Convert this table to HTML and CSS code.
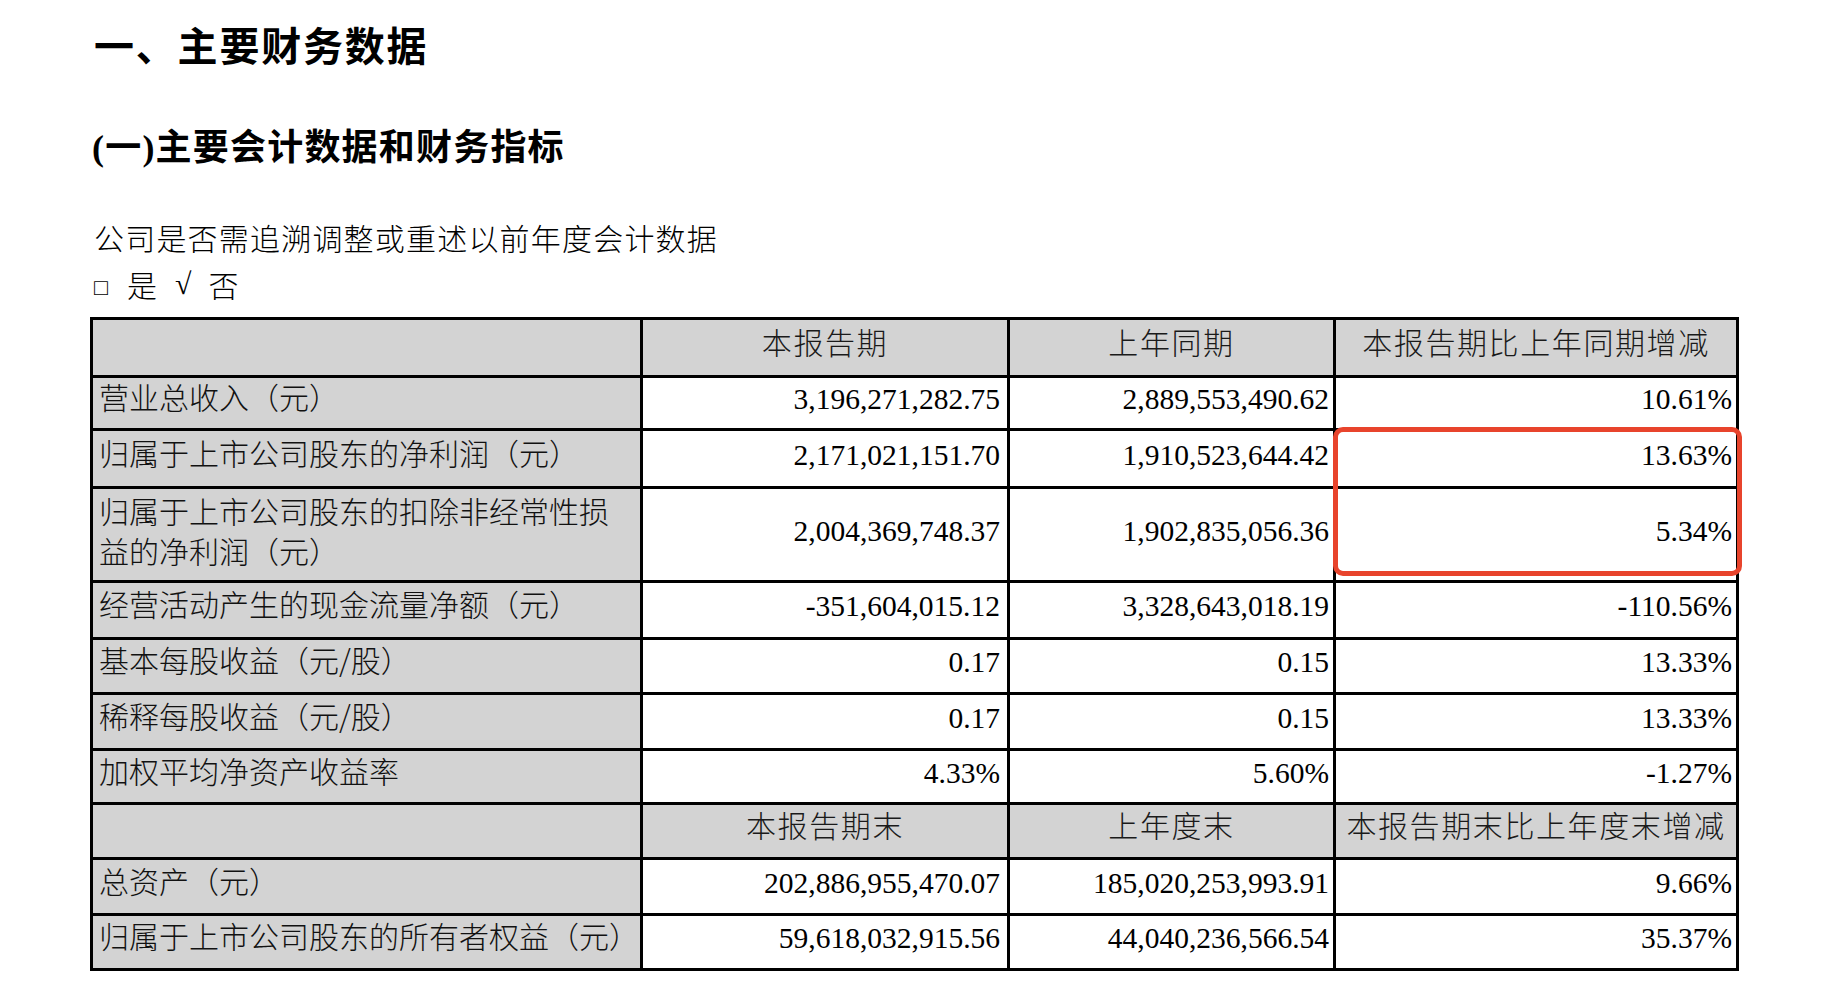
FILE: index.html
```html
<!DOCTYPE html>
<html lang="zh-CN">
<head>
<meta charset="utf-8">
<title>主要财务数据</title>
<link rel="stylesheet" href="styles.css">
</head>
<body>
<main class="page">
  <h1 class="title">一、主要财务数据</h1>
  <h2 class="subtitle"><span class="paren">(</span>一<span class="paren">)</span>主要会计数据和财务指标</h2>
  <p class="note">公司是否需追溯调整或重述以前年度会计数据</p>
  <p class="choice"><span class="box">□</span><span class="opt">是</span><span class="check">√</span><span class="opt">否</span></p>

  <div class="table-wrap">
    <table class="fin">
      <colgroup>
        <col class="c-label">
        <col class="c-cur">
        <col class="c-prev">
        <col class="c-chg">
      </colgroup>
      <tr class="head rh58">
        <th></th><th>本报告期</th><th>上年同期</th><th>本报告期比上年同期增减</th>
      </tr>
      <tr class="rh53">
        <td class="label">营业总收入（元）</td>
        <td class="num">3,196,271,282.75</td>
        <td class="num">2,889,553,490.62</td>
        <td class="num">10.61%</td>
      </tr>
      <tr class="rh58">
        <td class="label">归属于上市公司股东的净利润（元）</td>
        <td class="num">2,171,021,151.70</td>
        <td class="num">1,910,523,644.42</td>
        <td class="num">13.63%</td>
      </tr>
      <tr class="rh94">
        <td class="label two">归属于上市公司股东的扣除非经常性损<br>益的净利润（元）</td>
        <td class="num">2,004,369,748.37</td>
        <td class="num">1,902,835,056.36</td>
        <td class="num">5.34%</td>
      </tr>
      <tr class="rh57">
        <td class="label">经营活动产生的现金流量净额（元）</td>
        <td class="num">-351,604,015.12</td>
        <td class="num">3,328,643,018.19</td>
        <td class="num">-110.56%</td>
      </tr>
      <tr class="rh55">
        <td class="label">基本每股收益（元/股）</td>
        <td class="num">0.17</td>
        <td class="num">0.15</td>
        <td class="num">13.33%</td>
      </tr>
      <tr class="rh56">
        <td class="label">稀释每股收益（元/股）</td>
        <td class="num">0.17</td>
        <td class="num">0.15</td>
        <td class="num">13.33%</td>
      </tr>
      <tr class="rh54">
        <td class="label">加权平均净资产收益率</td>
        <td class="num">4.33%</td>
        <td class="num">5.60%</td>
        <td class="num">-1.27%</td>
      </tr>
      <tr class="head rh55">
        <th></th><th>本报告期末</th><th>上年度末</th><th>本报告期末比上年度末增减</th>
      </tr>
      <tr class="rh56">
        <td class="label">总资产（元）</td>
        <td class="num">202,886,955,470.07</td>
        <td class="num">185,020,253,993.91</td>
        <td class="num">9.66%</td>
      </tr>
      <tr class="rh55">
        <td class="label">归属于上市公司股东的所有者权益（元）</td>
        <td class="num">59,618,032,915.56</td>
        <td class="num">44,040,236,566.54</td>
        <td class="num">35.37%</td>
      </tr>
    </table>
    <div class="highlight"></div>
  </div>
</main>
</body>
</html>
```

FILE: styles.css
```css
html, body {
  margin: 0;
  padding: 0;
  background: #ffffff;
}

.page {
  padding-left: 90px;
  color: #000;
  font-family: "Noto Sans CJK SC", "Liberation Serif", serif;
}

.title {
  margin: 20px 0 0 4px;
  font-size: 40px;
  line-height: 48px;
  font-weight: 700;
  letter-spacing: 1.8px;
}

.subtitle {
  margin: 54px 0 0 2px;
  font-size: 36px;
  line-height: 44px;
  font-weight: 700;
  letter-spacing: 1.2px;
}

.subtitle .paren {
  font-family: "Liberation Serif", serif;
  font-weight: 700;
}

.note {
  margin: 47px 0 0 4px;
  font-size: 30px;
  line-height: 40px;
  font-weight: 300;
  letter-spacing: 1.2px;
}

.choice {
  margin: 4px 0 0 4px;
  font-size: 30px;
  line-height: 40px;
  font-weight: 300;
  display: flex;
  align-items: center;
}

.choice .box {
  font-family: "DejaVu Sans", sans-serif;
  font-size: 23px;
  line-height: 40px;
  margin-right: 19px;
  padding-top: 6px;
}

.choice .opt {
  margin-right: 18px;
}

.choice .check {
  font-family: "Liberation Serif", serif;
  font-size: 30px;
  margin-right: 17px;
}

.table-wrap {
  position: relative;
  margin-top: 10px;
  width: 1649px;
}

.fin {
  border-collapse: collapse;
  table-layout: fixed;
  width: 1649px;
  font-size: 30px;
}

.c-label { width: 550px; }
.c-cur { width: 367px; }
.c-prev { width: 326px; }
.c-chg { width: 403px; }

.fin th,
.fin td {
  border: 3px solid #000;
  padding: 0 6px;
  line-height: 30px;
  vertical-align: middle;
  white-space: nowrap;
  overflow: visible;
}

.fin th {
  background: #d3d3d3;
  font-weight: 300;
  text-align: center;
  letter-spacing: 1.6px;
  color: #1a1a1a;
  padding-bottom: 14px;
}

.fin .label {
  background: #d3d3d3;
  font-weight: 300;
  text-align: left;
  padding-bottom: 14px;
  color: #111;
}

.fin .label.two {
  line-height: 40px;
  padding-bottom: 10px;
}

.fin .num {
  font-family: "Liberation Serif", serif;
  font-size: 29.5px;
  text-align: right;
  padding-right: 7px;
  padding-bottom: 8px;
  background: #fff;
}

.fin .num ~ .num {
  padding-right: 4px;
}

.rh53 { height: 53px; }
.rh54 { height: 54px; }
.rh55 { height: 55px; }
.rh56 { height: 56px; }
.rh57 { height: 57px; }
.rh58 { height: 58px; }
.rh94 { height: 94px; }

.highlight {
  position: absolute;
  left: 1243px;
  top: 110px;
  width: 409px;
  height: 149px;
  box-sizing: border-box;
  border: 5px solid #e8442c;
  border-radius: 10px;
  pointer-events: none;
}
```
